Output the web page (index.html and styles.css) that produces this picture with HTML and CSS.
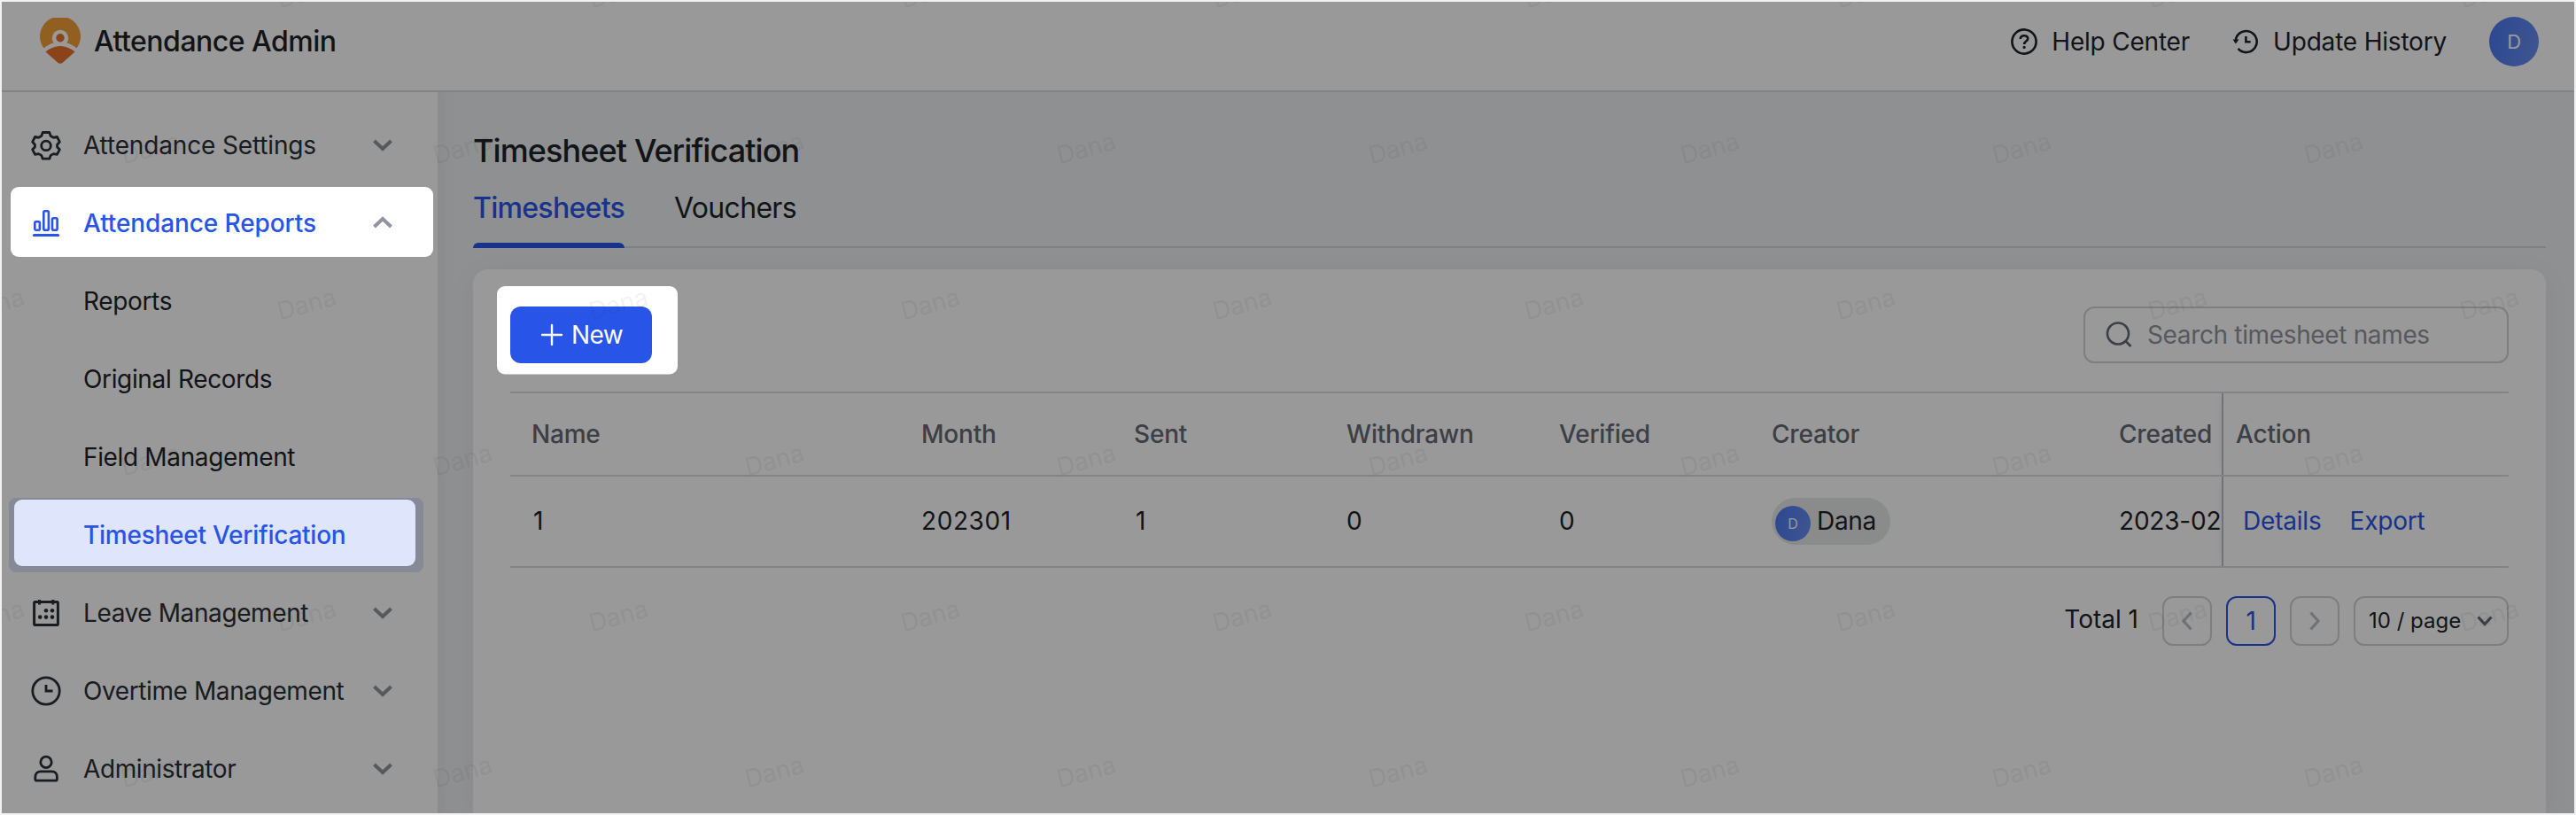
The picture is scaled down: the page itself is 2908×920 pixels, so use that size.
FILE: index.html
```html
<!DOCTYPE html>
<html lang="en">
<head>
    <meta charset="UTF-8">
    <title>Attendance Admin</title>
    <link rel="stylesheet" href="styles.css">
</head>
<body>
    <div class="page">
        <header class="header">
            <svg class="logo" width="46" height="52" viewBox="0 0 46 52">
                <path d="M4.5 34.5A23 22.6 0 1 1 41.5 34.5Q33 28 23 28T4.5 34.5Z" fill="#f2a038"/>
                <circle cx="23" cy="23" r="9.2" fill="#fff"/>
                <path d="M2 37Q12 27 23 27T44 37L41 41Q33 32 23 32T5 41Z" fill="#fff"/>
                <circle cx="23" cy="22.8" r="4.7" fill="#e8702c"/>
                <path d="M6.5 38.5Q14 32 23 32T39.5 38.5L26 50.5Q23 53 20 50.5Z" fill="#e8702c"/>
            </svg>
            <span class="brand">Attendance Admin</span>
            <a class="header-link help">
                <svg width="32" height="32" viewBox="0 0 32 32" fill="none" stroke="#1f2329" stroke-width="2.6">
                    <circle cx="16" cy="16" r="13.6"/>
                    <path d="M11.7 13C11.9 10.6 13.6 9.2 16 9.2S20.2 10.6 20.2 12.7C20.2 15.6 16.1 15.6 16.1 18.9"/>
                    <circle cx="16.1" cy="22.4" r="1.6" fill="#1f2329" stroke="none"/>
                </svg>
                <span>Help Center</span>
            </a>
            <a class="header-link history">
                <svg width="32" height="32" viewBox="0 0 32 32" fill="none" stroke="#1f2329" stroke-width="2.6">
                    <path d="M4.8 14.5A12 12 0 1 1 7.6 23.9"/>
                    <path d="M1.6 13.6H8.6L4.8 18.4Z" fill="#1f2329" stroke="none"/>
                    <path d="M16.4 10V16.3H21.6"/>
                </svg>
                <span>Update History</span>
            </a>
            <span class="avatar">D</span>
        </header>
        <div class="body">
            <nav class="sidebar">
                <a class="item settings">
                    <svg class="icon" width="36" height="36" viewBox="0 0 36 36" fill="none" stroke="#2b2f36" stroke-width="2.8" stroke-linejoin="round">
                        <path d="M14.2 3.5H21.8L23.2 7.6L26.4 9.3L30.4 8.3L33.3 14.2L30.6 17.2V20L33.3 22.8L30.4 28.4L26.4 27.6L23.2 29.4L21.8 33.2H14.2L12.8 29.4L9.6 27.6L5.6 28.4L2.7 22.8L5.4 20V17.2L2.7 14.2L5.6 8.3L9.6 9.3L12.8 7.6Z"/>
                        <circle cx="18" cy="18.4" r="5.3"/>
                    </svg>
                    <span>Attendance Settings</span>
                    <svg class="chevron" width="24" height="16" viewBox="0 0 24 16"><path d="M2.5 3L12 12L21.5 3"/></svg>
                </a>
                <a class="item open">
                    <svg class="icon" width="36" height="36" viewBox="0 0 36 36" fill="none" stroke="#2855e8" stroke-width="2.6">
                        <rect x="5.3" y="16.3" width="5.6" height="9.4" rx="1.5"/>
                        <rect x="15.3" y="4.3" width="5.6" height="21.4" rx="1.5"/>
                        <rect x="25" y="12.3" width="5.6" height="13.4" rx="1.5"/>
                        <path d="M4.4 31.6H31.6" stroke-width="3" stroke-linecap="round"/>
                    </svg>
                    <span>Attendance Reports</span>
                    <svg class="chevron" width="24" height="16" viewBox="0 0 24 16"><path d="M2.5 12L12 3L21.5 12"/></svg>
                </a>
                <a class="subitem">Reports</a>
                <a class="subitem">Original Records</a>
                <a class="subitem">Field Management</a>
                <a class="subitem active">Timesheet Verification</a>
                <a class="item">
                    <svg class="icon" width="36" height="36" viewBox="0 0 36 36" fill="none" stroke="#2b2f36" stroke-width="3">
                        <rect x="4.6" y="5.6" width="26.8" height="25.8" rx="1"/>
                        <path d="M10.5 3V8.5M25.8 3V8.5"/>
                        <g fill="#2b2f36" stroke="none">
                            <circle cx="18" cy="15.3" r="2.3"/>
                            <circle cx="25" cy="15.3" r="2.3"/>
                            <circle cx="11.2" cy="22.6" r="2.3"/>
                            <circle cx="18" cy="22.6" r="2.3"/>
                            <circle cx="25" cy="22.6" r="2.3"/>
                        </g>
                    </svg>
                    <span>Leave Management</span>
                    <svg class="chevron" width="24" height="16" viewBox="0 0 24 16"><path d="M2.5 3L12 12L21.5 3"/></svg>
                </a>
                <a class="item">
                    <svg class="icon" width="36" height="36" viewBox="0 0 36 36" fill="none" stroke="#2b2f36" stroke-width="2.8">
                        <circle cx="18" cy="18" r="15.2"/>
                        <path d="M18 11V18H25.5"/>
                    </svg>
                    <span>Overtime Management</span>
                    <svg class="chevron" width="24" height="16" viewBox="0 0 24 16"><path d="M2.5 3L12 12L21.5 3"/></svg>
                </a>
                <a class="item">
                    <svg class="icon" width="36" height="36" viewBox="0 0 36 36" fill="none" stroke="#2b2f36" stroke-width="2.8">
                        <circle cx="18" cy="10.4" r="6.2"/>
                        <path d="M5.8 29.5V27C5.8 23.3 8.5 20.9 12 20.9H24.5C28 20.9 30.4 23.3 30.4 27V29.5C30.4 30.6 29.8 31.2 28.7 31.2H7.5C6.4 31.2 5.8 30.6 5.8 29.5Z"/>
                    </svg>
                    <span>Administrator</span>
                    <svg class="chevron" width="24" height="16" viewBox="0 0 24 16"><path d="M2.5 3L12 12L21.5 3"/></svg>
                </a>
            </nav>
            <main class="main">
                <h1 class="title">Timesheet Verification</h1>
                <div class="tabs">
                    <a class="tab current">Timesheets</a>
                    <a class="tab">Vouchers</a>
                </div>
                <section class="card">
                    <div class="toolbar">
                        <button class="new">
                            <svg width="26" height="26" viewBox="0 0 26 26" stroke="#fff" stroke-width="2.4" stroke-linecap="round"><path d="M13 2V24M2 13H24"/></svg>
                            <span>New</span>
                        </button>
                        <div class="search">
                            <svg width="32" height="32" viewBox="0 0 32 32" fill="none" stroke="#646a73" stroke-width="2.6">
                                <circle cx="15" cy="14.5" r="12"/>
                                <path d="M23.5 23L29.5 29"/>
                            </svg>
                            <span>Search timesheet names</span>
                        </div>
                    </div>
                    <div class="table">
                        <div class="row head">
                            <span>Name</span>
                            <span>Month</span>
                            <span>Sent</span>
                            <span>Withdrawn</span>
                            <span>Verified</span>
                            <span>Creator</span>
                            <span>Created</span>
                            <span class="action">Action</span>
                        </div>
                        <div class="row">
                            <span class="one">1</span>
                            <span class="num">202301</span>
                            <span class="one">1</span>
                            <span>0</span>
                            <span>0</span>
                            <span><i class="chip"><i class="avatar small">D</i><b>Dana</b></i></span>
                            <span>2023-02</span>
                            <span class="action links"><a>Details</a><a>Export</a></span>
                        </div>
                    </div>
                    <div class="pager">
                        <span class="total">Total 1</span>
                        <a class="page-btn"><svg width="16" height="24" viewBox="0 0 16 24"><path d="M12.5 2.5L4 12L12.5 21.5"/></svg></a>
                        <a class="page-btn on">1</a>
                        <a class="page-btn"><svg width="16" height="24" viewBox="0 0 16 24"><path d="M3.5 2.5L12 12L3.5 21.5"/></svg></a>
                        <a class="page-size"><span>10 / page</span><svg width="20" height="14" viewBox="0 0 20 14"><path d="M2.5 2.5L10 10.5L17.5 2.5"/></svg></a>
                    </div>
                </section>
            </main>
        </div>
        <!-- watermark -->
        <svg class="layer" width="2904" height="916">
            <defs>
                <pattern id="mark" width="352" height="352" patternUnits="userSpaceOnUse" patternTransform="translate(168 165)">
                    <g class="mark">
                        <text transform="translate(0 0) rotate(-15)" y="10">Dana</text>
                        <text transform="translate(352 0) rotate(-15)" y="10">Dana</text>
                        <text transform="translate(0 352) rotate(-15)" y="10">Dana</text>
                        <text transform="translate(352 352) rotate(-15)" y="10">Dana</text>
                        <text transform="translate(176 176) rotate(-15)" y="10">Dana</text>
                    </g>
                </pattern>
            </defs>
            <rect width="2904" height="916" fill="url(#mark)"/>
        </svg>
        <!-- dimmed layer with the highlighted spots cut out -->
        <svg class="layer" width="2904" height="916">
            <mask id="spots">
                <rect width="2904" height="916" fill="#fff"/>
                <rect x="10" y="209" width="477" height="79" rx="9"/>
                <rect x="14" y="562" width="453" height="75" rx="9"/>
                <rect x="559" y="321" width="204" height="99.5" rx="9"/>
            </mask>
            <rect width="2904" height="916" fill="#000" fill-opacity=".4" mask="url(#spots)"/>
        </svg>
    </div>
</body>
</html>
```
FILE: styles.css
```css
body {
    margin: 0;
    background: #f2f2f2;
    font-family: Inter, "Liberation Sans", sans-serif;
    font-size: 28px;
    line-height: 40px;
    letter-spacing: -0.2px;
    color: #1f2329;
}

.page {
    position: relative;
    width: 2904px;
    height: 916px;
    margin: 2px;
    overflow: hidden;
    background: #fff;
    display: flex;
    flex-direction: column;
}

.header {
    box-sizing: border-box;
    height: 102px;
    padding: 0 40px 10px 43px;
    border-bottom: 2px solid #d8dadd;
    display: flex;
    align-items: center;
    flex-shrink: 0;
}

.logo {
    margin-top: -2px;
}

.brand {
    margin-left: 15px;
    margin-right: auto;
    font-size: 32px;
    font-weight: 500;
    letter-spacing: -0.5px;
}

.header-link {
    display: flex;
    align-items: center;
}

.header-link span {
    margin-left: 15px;
}

.header-link.history {
    margin-left: 47px;
}

.avatar {
    width: 56px;
    height: 56px;
    margin-left: 48px;
    border-radius: 50%;
    background: linear-gradient(105deg, #4a78f2, #6b8ff0);
    color: #fff;
    font-size: 22px;
    font-style: normal;
    text-align: center;
    line-height: 56px;
}

.body {
    display: flex;
    flex: 1;
}

.sidebar {
    box-sizing: border-box;
    display: flex;
    flex-direction: column;
    width: 492px;
    height: 814px;
    padding-top: 16px;
    flex-shrink: 0;
}

.item {
    display: flex;
    align-items: center;
    flex-shrink: 0;
    height: 88px;
    padding: 0 50px 0 32px;
    color: #2b2f36;
    letter-spacing: -0.4px;
}

.item span {
    margin-left: 24px;
    margin-right: auto;
}

.item.settings {
    letter-spacing: -0.15px;
}

.item.open {
    color: #2855e8;
    font-weight: 500;
    letter-spacing: -0.1px;
}

.chevron {
    fill: none;
    stroke: #8f959e;
    stroke-width: 4;
}

.subitem {
    flex-shrink: 0;
    height: 84px;
    margin: 2px 16px 2px 8px;
    padding-left: 84px;
    border-radius: 8px;
    line-height: 84px;
    letter-spacing: -0.35px;
}

.subitem.active {
    background: #dfe5fb;
    color: #2855e8;
    font-weight: 500;
    letter-spacing: -0.25px;
}

.main {
    flex: 1;
    padding: 44px 32px 0 40px;
    background: #eff0f3;
    box-shadow: inset 20px 0 20px -16px rgba(31, 35, 41, 0.04);
    display: flex;
    flex-direction: column;
}

.title {
    margin: 0;
    font-size: 36px;
    font-weight: 500;
    line-height: 44px;
    letter-spacing: -0.9px;
}

.tabs {
    display: flex;
    gap: 56px;
    height: 86px;
    border-bottom: 2px solid #d4d6da;
}

.tab {
    position: relative;
    padding-top: 23px;
    font-size: 32px;
    letter-spacing: -0.7px;
}

.tab.current {
    color: #2855e8;
    font-weight: 500;
}

.tab.current::after {
    content: "";
    position: absolute;
    left: 0;
    right: 0;
    bottom: -2px;
    height: 6px;
    border-radius: 6px 6px 0 0;
    background: #2855e8;
}

.card {
    flex: 1;
    margin-top: 24px;
    padding: 42px;
    border-radius: 16px 16px 0 0;
    background: #fff;
    box-shadow: 0 4px 32px rgba(31, 35, 41, 0.05);
}

.toolbar {
    display: flex;
    justify-content: space-between;
    margin-bottom: 32px;
}

.new {
    display: flex;
    align-items: center;
    width: 160px;
    height: 64px;
    padding: 0 0 0 34px;
    border: 0;
    border-radius: 12px;
    background: #2855e8;
    color: #fff;
    font: 400 28px/40px Inter, "Liberation Sans", sans-serif;
    letter-spacing: -0.6px;
}

.new span {
    margin-left: 9px;
}

.search {
    box-sizing: border-box;
    display: flex;
    align-items: center;
    width: 480px;
    height: 64px;
    padding-left: 22px;
    border: 2px solid #d0d3d6;
    border-radius: 12px;
    color: #8f959e;
    letter-spacing: -0.35px;
}

.search span {
    margin-left: 16px;
}

.row {
    display: grid;
    grid-template-columns: 440px 240px 240px 240px 240px 392px 116px 1fr;
    height: 101px;
    padding-left: 24px;
    border-bottom: 2px solid #dadce0;
    line-height: 101px;
    white-space: nowrap;
}

.row.head {
    height: 92px;
    border-top: 2px solid #dadce0;
    color: #646a73;
    font-weight: 500;
    line-height: 92px;
}

.num {
    letter-spacing: 0.6px;
}

.one {
    padding-left: 2px;
}

.action {
    border-left: 2px solid #bbbfc4;
    padding-left: 14px;
    box-shadow: -6px 0 12px -6px rgba(31, 35, 41, 0.06);
}

.links {
    padding-left: 22px;
    color: #2855e8;
}

.links a {
    margin-right: 32px;
}

.chip {
    display: flex;
    align-items: center;
    box-sizing: border-box;
    width: 134px;
    height: 53px;
    margin-top: 24px;
    padding-left: 4px;
    border-radius: 27px;
    background: #e6eaea;
    font-style: normal;
    line-height: 53px;
}

.chip b {
    margin-left: 7px;
    margin-top: -1px;
    font-weight: 400;
    letter-spacing: -0.3px;
}

.avatar.small {
    width: 40px;
    height: 40px;
    margin: 5px 0 0;
    font-size: 16px;
    line-height: 40px;
}

.pager {
    display: flex;
    justify-content: flex-end;
    gap: 16px;
    margin-top: 32px;
    line-height: 52px;
}

.total {
    margin-right: 11px;
    letter-spacing: 0;
}

.page-btn,
.page-size {
    box-sizing: border-box;
    display: flex;
    align-items: center;
    justify-content: center;
    width: 56px;
    height: 56px;
    border: 2px solid #d0d3d6;
    border-radius: 12px;
}

.page-btn svg,
.page-size svg {
    fill: none;
    stroke: #bbbfc4;
    stroke-width: 3.2;
}

.page-btn.on {
    border-color: #2855e8;
    color: #2855e8;
}

.page-size {
    width: 175px;
    font-size: 24px;
    justify-content: flex-start;
    padding-left: 15px;
    letter-spacing: 0;
}

.page-size svg {
    margin-left: 17px;
    stroke: #646a73;
}

.layer {
    position: absolute;
    left: 0;
    top: 0;
}

.mark text {
    font-size: 28px;
    fill: #1f2329;
    fill-opacity: 0.06;
    text-anchor: middle;
}
```
